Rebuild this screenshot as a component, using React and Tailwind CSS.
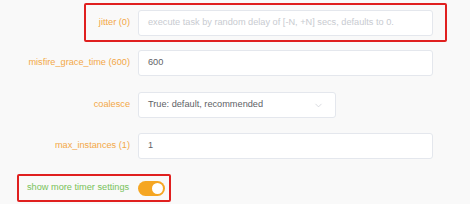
import { ChevronDown } from "lucide-react";

const labelCls = "text-[9.2px] text-[#f3a847] text-right whitespace-nowrap";
const inputCls =
  "h-[26px] bg-white border border-[#e4e7ed] rounded-[3px] px-[9px] text-[9.2px] text-[#606266] flex items-center whitespace-nowrap overflow-hidden";

export default function App() {
  return (
    <div className="w-[474px] h-[207px] bg-white" style={{ fontFamily: '"Liberation Sans", Arial, sans-serif' }}>
      <div className="w-[470px] h-[204px] bg-[#f9f9f9] pt-[3px]">
        {/* jitter row, highlighted */}
        <div className="ml-[84px] w-[363px] h-[39px] border-2 border-[#e0201f] rounded-[2px] flex items-center">
          <div className={`w-[44px] ${labelCls}`}>jitter (0)</div>
          <div className={`ml-[8px] w-[295px] ${inputCls} text-[#c8cbd1]`}>
            execute task by random delay of [-N, +N] secs, defaults to 0.
          </div>
        </div>

        <div className="mt-[8px] flex items-center">
          <div className={`w-[130px] ${labelCls}`}>misfire_grace_time (600)</div>
          <div className={`ml-[8px] w-[295px] ${inputCls}`}>600</div>
        </div>

        <div className="mt-[16px] flex items-center">
          <div className={`w-[130px] ${labelCls}`}>coalesce</div>
          <div className={`ml-[8px] w-[198px] ${inputCls} justify-between`}>
            <span>True: default, recommended</span>
            <ChevronDown size={11} strokeWidth={1.5} className="text-[#c8cbd1] mr-[2px] shrink-0" />
          </div>
        </div>

        <div className="mt-[15px] flex items-center">
          <div className={`w-[130px] ${labelCls}`}>max_instances (1)</div>
          <div className={`ml-[8px] w-[295px] ${inputCls}`}>1</div>
        </div>

        {/* timer toggle, highlighted */}
        <div className="mt-[15px] ml-[17px] w-[154px] h-[28px] border-2 border-[#e0201f] rounded-[2px] flex items-center pl-[8px]">
          <span className="w-[103px] shrink-0 text-[9.2px] text-[#78c25a] whitespace-nowrap">show more timer settings</span>
          <div className="ml-[8px] w-[27px] h-[15px] shrink-0 rounded-full bg-[#f5a623] flex items-center justify-end pr-[2px]">
            <div className="w-[11px] h-[11px] rounded-full bg-white" />
          </div>
        </div>
      </div>
    </div>
  );
}
